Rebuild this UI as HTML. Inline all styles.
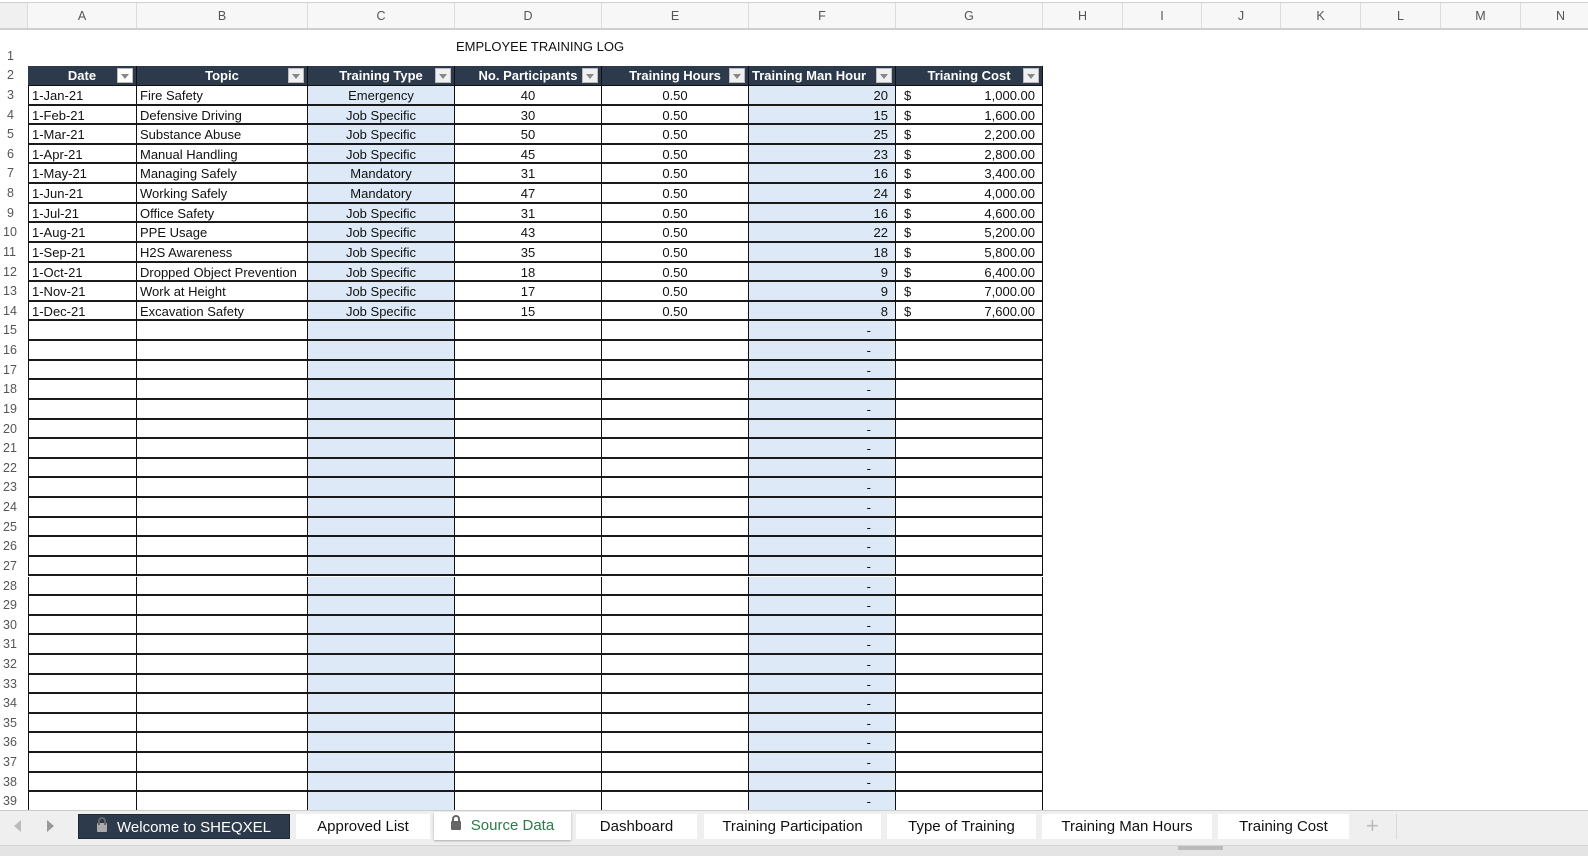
<!DOCTYPE html>
<html><head><meta charset="utf-8"><style>
*{box-sizing:border-box;margin:0;padding:0}
body{width:1588px;height:856px;overflow:hidden;background:#fff;font-family:"Liberation Sans",sans-serif;position:relative}
.ch{position:absolute;top:2px;left:0;height:28px;width:1588px;background:#f7f7f7;border-top:1px solid #d0d0d0;border-bottom:2px solid #cfcfcf;display:flex}
.ch div{height:100%;border-right:1px solid #dcdcdc;text-align:center;font-size:12.5px;color:#555;line-height:27px;flex:none}
.row{position:absolute;left:0;display:flex;height:19.62px}
.c{flex:none;height:100%;font-size:13px;line-height:19px;white-space:nowrap;overflow:hidden;padding:0 3px;color:#111}
.rn{width:28px;color:#555;font-size:12.5px;padding-left:7px;background:#fff}
.t .c:not(.rn){border-bottom:2px solid #1a1a1a;border-right:1px solid #111}
.t .a{border-left:1px solid #111}
.w1{width:109px}.w2{width:171px}.w3{width:147px}
.bl{background:#dde9f6}
.ctr{text-align:center}.r{text-align:right;padding-right:7px}
.h .c:not(.rn){background:#2d3a4b;color:#fff;font-weight:bold;font-size:13px;text-align:center;position:relative;border-right:1px solid #111;border-bottom:1px solid #111}
.fb{position:absolute;right:3px;top:2px;width:16px;height:15px;background:#eef0f2;border:1px solid #bbb}
.fb:after{content:"";position:absolute;left:3px;top:5px;border-left:4px solid transparent;border-right:4px solid transparent;border-top:5px solid #888}
.g .dol{float:left}.g{padding-left:8px}
.tabs{position:absolute;left:0;top:810px;width:1588px;height:35px;background:#efefef;border-top:1px solid #ccc}
.tab{position:absolute;top:3px;height:25px;background:#fff;font-size:15px;line-height:25px;text-align:center;color:#111}
.lock{display:inline-block;width:10px;height:9px;background:#666;border-radius:1px;position:relative;margin-right:10px;top:0}
.lock:before{content:"";position:absolute;left:1px;top:-6px;width:4px;height:6px;border:2px solid #666;border-bottom:none;border-radius:4px 4px 0 0}
.bot{position:absolute;left:0;top:845px;width:1588px;height:11px;background:#e4e4e4;border-top:1px solid #d4d4d4}
</style></head><body>
<div style="position:absolute;left:0;top:2px;width:28px;height:28px;background:#f0f0f0"><div style="position:absolute;left:6px;top:6px;border-left:18px solid transparent;border-bottom:18px solid #ddd"></div></div>
<div class="ch"><div style="width:28px;background:#f0f0f0"></div><div style="width:109px">A</div><div style="width:171px">B</div><div style="width:147px">C</div><div style="width:147px">D</div><div style="width:147px">E</div><div style="width:147px">F</div><div style="width:147px">G</div><div style="width:80px">H</div><div style="width:79px">I</div><div style="width:79px">J</div><div style="width:80px">K</div><div style="width:80px">L</div><div style="width:80px">M</div><div style="width:80px">N</div></div>
<div class="row" style="top:30px;height:36px"><div class="c rn" style="padding-top:17px">1</div><div style="position:absolute;left:456px;top:9px;font-size:13px;color:#111;white-space:nowrap">EMPLOYEE TRAINING LOG</div></div>
<div class="row h" style="top:66px;height:20px"><div class="c rn" style="background:#fff;color:#555">2</div>
<div class="c w1 a">Date<span class="fb" style="background:#fff"></span></div><div class="c w2">Topic<span class="fb"></span></div><div class="c w3">Training Type<span class="fb"></span></div><div class="c w3">No. Participants<span class="fb"></span></div><div class="c w3">Training Hours<span class="fb"></span></div><div class="c w3" style="text-align:left">Training Man Hour<span class="fb"></span></div><div class="c w3">Trianing Cost<span class="fb"></span></div></div>

<div class="row t" style="top:86px"><div class="c rn">3</div><div class="c w1 a">1-Jan-21</div><div class="c w2">Fire Safety</div><div class="c w3 bl ctr">Emergency</div><div class="c w3 ctr">40</div><div class="c w3 ctr">0.50</div><div class="c w3 bl r">20</div><div class="c w3 g r"><span class="dol">$</span>1,000.00</div></div>
<div class="row t" style="top:105.62px"><div class="c rn">4</div><div class="c w1 a">1-Feb-21</div><div class="c w2">Defensive Driving</div><div class="c w3 bl ctr">Job Specific</div><div class="c w3 ctr">30</div><div class="c w3 ctr">0.50</div><div class="c w3 bl r">15</div><div class="c w3 g r"><span class="dol">$</span>1,600.00</div></div>
<div class="row t" style="top:125.24px"><div class="c rn">5</div><div class="c w1 a">1-Mar-21</div><div class="c w2">Substance Abuse</div><div class="c w3 bl ctr">Job Specific</div><div class="c w3 ctr">50</div><div class="c w3 ctr">0.50</div><div class="c w3 bl r">25</div><div class="c w3 g r"><span class="dol">$</span>2,200.00</div></div>
<div class="row t" style="top:144.86px"><div class="c rn">6</div><div class="c w1 a">1-Apr-21</div><div class="c w2">Manual Handling</div><div class="c w3 bl ctr">Job Specific</div><div class="c w3 ctr">45</div><div class="c w3 ctr">0.50</div><div class="c w3 bl r">23</div><div class="c w3 g r"><span class="dol">$</span>2,800.00</div></div>
<div class="row t" style="top:164.48px"><div class="c rn">7</div><div class="c w1 a">1-May-21</div><div class="c w2">Managing Safely</div><div class="c w3 bl ctr">Mandatory</div><div class="c w3 ctr">31</div><div class="c w3 ctr">0.50</div><div class="c w3 bl r">16</div><div class="c w3 g r"><span class="dol">$</span>3,400.00</div></div>
<div class="row t" style="top:184.1px"><div class="c rn">8</div><div class="c w1 a">1-Jun-21</div><div class="c w2">Working Safely</div><div class="c w3 bl ctr">Mandatory</div><div class="c w3 ctr">47</div><div class="c w3 ctr">0.50</div><div class="c w3 bl r">24</div><div class="c w3 g r"><span class="dol">$</span>4,000.00</div></div>
<div class="row t" style="top:203.72px"><div class="c rn">9</div><div class="c w1 a">1-Jul-21</div><div class="c w2">Office Safety</div><div class="c w3 bl ctr">Job Specific</div><div class="c w3 ctr">31</div><div class="c w3 ctr">0.50</div><div class="c w3 bl r">16</div><div class="c w3 g r"><span class="dol">$</span>4,600.00</div></div>
<div class="row t" style="top:223.34px"><div class="c rn" style="padding-left:3px">10</div><div class="c w1 a">1-Aug-21</div><div class="c w2">PPE Usage</div><div class="c w3 bl ctr">Job Specific</div><div class="c w3 ctr">43</div><div class="c w3 ctr">0.50</div><div class="c w3 bl r">22</div><div class="c w3 g r"><span class="dol">$</span>5,200.00</div></div>
<div class="row t" style="top:242.96px"><div class="c rn" style="padding-left:3px">11</div><div class="c w1 a">1-Sep-21</div><div class="c w2">H2S Awareness</div><div class="c w3 bl ctr">Job Specific</div><div class="c w3 ctr">35</div><div class="c w3 ctr">0.50</div><div class="c w3 bl r">18</div><div class="c w3 g r"><span class="dol">$</span>5,800.00</div></div>
<div class="row t" style="top:262.58px"><div class="c rn" style="padding-left:3px">12</div><div class="c w1 a">1-Oct-21</div><div class="c w2">Dropped Object Prevention</div><div class="c w3 bl ctr">Job Specific</div><div class="c w3 ctr">18</div><div class="c w3 ctr">0.50</div><div class="c w3 bl r">9</div><div class="c w3 g r"><span class="dol">$</span>6,400.00</div></div>
<div class="row t" style="top:282.2px"><div class="c rn" style="padding-left:3px">13</div><div class="c w1 a">1-Nov-21</div><div class="c w2">Work at Height</div><div class="c w3 bl ctr">Job Specific</div><div class="c w3 ctr">17</div><div class="c w3 ctr">0.50</div><div class="c w3 bl r">9</div><div class="c w3 g r"><span class="dol">$</span>7,000.00</div></div>
<div class="row t" style="top:301.82px"><div class="c rn" style="padding-left:3px">14</div><div class="c w1 a">1-Dec-21</div><div class="c w2">Excavation Safety</div><div class="c w3 bl ctr">Job Specific</div><div class="c w3 ctr">15</div><div class="c w3 ctr">0.50</div><div class="c w3 bl r">8</div><div class="c w3 g r"><span class="dol">$</span>7,600.00</div></div>
<div class="row t" style="top:321.44px"><div class="c rn" style="padding-left:3px">15</div><div class="c w1 a"></div><div class="c w2"></div><div class="c w3 bl"></div><div class="c w3"></div><div class="c w3"></div><div class="c w3 bl r" style="padding-right:24px">-</div><div class="c w3"></div></div>
<div class="row t" style="top:341.06px"><div class="c rn" style="padding-left:3px">16</div><div class="c w1 a"></div><div class="c w2"></div><div class="c w3 bl"></div><div class="c w3"></div><div class="c w3"></div><div class="c w3 bl r" style="padding-right:24px">-</div><div class="c w3"></div></div>
<div class="row t" style="top:360.68px"><div class="c rn" style="padding-left:3px">17</div><div class="c w1 a"></div><div class="c w2"></div><div class="c w3 bl"></div><div class="c w3"></div><div class="c w3"></div><div class="c w3 bl r" style="padding-right:24px">-</div><div class="c w3"></div></div>
<div class="row t" style="top:380.3px"><div class="c rn" style="padding-left:3px">18</div><div class="c w1 a"></div><div class="c w2"></div><div class="c w3 bl"></div><div class="c w3"></div><div class="c w3"></div><div class="c w3 bl r" style="padding-right:24px">-</div><div class="c w3"></div></div>
<div class="row t" style="top:399.92px"><div class="c rn" style="padding-left:3px">19</div><div class="c w1 a"></div><div class="c w2"></div><div class="c w3 bl"></div><div class="c w3"></div><div class="c w3"></div><div class="c w3 bl r" style="padding-right:24px">-</div><div class="c w3"></div></div>
<div class="row t" style="top:419.54px"><div class="c rn" style="padding-left:3px">20</div><div class="c w1 a"></div><div class="c w2"></div><div class="c w3 bl"></div><div class="c w3"></div><div class="c w3"></div><div class="c w3 bl r" style="padding-right:24px">-</div><div class="c w3"></div></div>
<div class="row t" style="top:439.16px"><div class="c rn" style="padding-left:3px">21</div><div class="c w1 a"></div><div class="c w2"></div><div class="c w3 bl"></div><div class="c w3"></div><div class="c w3"></div><div class="c w3 bl r" style="padding-right:24px">-</div><div class="c w3"></div></div>
<div class="row t" style="top:458.78px"><div class="c rn" style="padding-left:3px">22</div><div class="c w1 a"></div><div class="c w2"></div><div class="c w3 bl"></div><div class="c w3"></div><div class="c w3"></div><div class="c w3 bl r" style="padding-right:24px">-</div><div class="c w3"></div></div>
<div class="row t" style="top:478.4px"><div class="c rn" style="padding-left:3px">23</div><div class="c w1 a"></div><div class="c w2"></div><div class="c w3 bl"></div><div class="c w3"></div><div class="c w3"></div><div class="c w3 bl r" style="padding-right:24px">-</div><div class="c w3"></div></div>
<div class="row t" style="top:498.02px"><div class="c rn" style="padding-left:3px">24</div><div class="c w1 a"></div><div class="c w2"></div><div class="c w3 bl"></div><div class="c w3"></div><div class="c w3"></div><div class="c w3 bl r" style="padding-right:24px">-</div><div class="c w3"></div></div>
<div class="row t" style="top:517.64px"><div class="c rn" style="padding-left:3px">25</div><div class="c w1 a"></div><div class="c w2"></div><div class="c w3 bl"></div><div class="c w3"></div><div class="c w3"></div><div class="c w3 bl r" style="padding-right:24px">-</div><div class="c w3"></div></div>
<div class="row t" style="top:537.26px"><div class="c rn" style="padding-left:3px">26</div><div class="c w1 a"></div><div class="c w2"></div><div class="c w3 bl"></div><div class="c w3"></div><div class="c w3"></div><div class="c w3 bl r" style="padding-right:24px">-</div><div class="c w3"></div></div>
<div class="row t" style="top:556.88px"><div class="c rn" style="padding-left:3px">27</div><div class="c w1 a"></div><div class="c w2"></div><div class="c w3 bl"></div><div class="c w3"></div><div class="c w3"></div><div class="c w3 bl r" style="padding-right:24px">-</div><div class="c w3"></div></div>
<div class="row t" style="top:576.5px"><div class="c rn" style="padding-left:3px">28</div><div class="c w1 a"></div><div class="c w2"></div><div class="c w3 bl"></div><div class="c w3"></div><div class="c w3"></div><div class="c w3 bl r" style="padding-right:24px">-</div><div class="c w3"></div></div>
<div class="row t" style="top:596.12px"><div class="c rn" style="padding-left:3px">29</div><div class="c w1 a"></div><div class="c w2"></div><div class="c w3 bl"></div><div class="c w3"></div><div class="c w3"></div><div class="c w3 bl r" style="padding-right:24px">-</div><div class="c w3"></div></div>
<div class="row t" style="top:615.74px"><div class="c rn" style="padding-left:3px">30</div><div class="c w1 a"></div><div class="c w2"></div><div class="c w3 bl"></div><div class="c w3"></div><div class="c w3"></div><div class="c w3 bl r" style="padding-right:24px">-</div><div class="c w3"></div></div>
<div class="row t" style="top:635.36px"><div class="c rn" style="padding-left:3px">31</div><div class="c w1 a"></div><div class="c w2"></div><div class="c w3 bl"></div><div class="c w3"></div><div class="c w3"></div><div class="c w3 bl r" style="padding-right:24px">-</div><div class="c w3"></div></div>
<div class="row t" style="top:654.98px"><div class="c rn" style="padding-left:3px">32</div><div class="c w1 a"></div><div class="c w2"></div><div class="c w3 bl"></div><div class="c w3"></div><div class="c w3"></div><div class="c w3 bl r" style="padding-right:24px">-</div><div class="c w3"></div></div>
<div class="row t" style="top:674.6px"><div class="c rn" style="padding-left:3px">33</div><div class="c w1 a"></div><div class="c w2"></div><div class="c w3 bl"></div><div class="c w3"></div><div class="c w3"></div><div class="c w3 bl r" style="padding-right:24px">-</div><div class="c w3"></div></div>
<div class="row t" style="top:694.22px"><div class="c rn" style="padding-left:3px">34</div><div class="c w1 a"></div><div class="c w2"></div><div class="c w3 bl"></div><div class="c w3"></div><div class="c w3"></div><div class="c w3 bl r" style="padding-right:24px">-</div><div class="c w3"></div></div>
<div class="row t" style="top:713.84px"><div class="c rn" style="padding-left:3px">35</div><div class="c w1 a"></div><div class="c w2"></div><div class="c w3 bl"></div><div class="c w3"></div><div class="c w3"></div><div class="c w3 bl r" style="padding-right:24px">-</div><div class="c w3"></div></div>
<div class="row t" style="top:733.46px"><div class="c rn" style="padding-left:3px">36</div><div class="c w1 a"></div><div class="c w2"></div><div class="c w3 bl"></div><div class="c w3"></div><div class="c w3"></div><div class="c w3 bl r" style="padding-right:24px">-</div><div class="c w3"></div></div>
<div class="row t" style="top:753.08px"><div class="c rn" style="padding-left:3px">37</div><div class="c w1 a"></div><div class="c w2"></div><div class="c w3 bl"></div><div class="c w3"></div><div class="c w3"></div><div class="c w3 bl r" style="padding-right:24px">-</div><div class="c w3"></div></div>
<div class="row t" style="top:772.7px"><div class="c rn" style="padding-left:3px">38</div><div class="c w1 a"></div><div class="c w2"></div><div class="c w3 bl"></div><div class="c w3"></div><div class="c w3"></div><div class="c w3 bl r" style="padding-right:24px">-</div><div class="c w3"></div></div>
<div class="row t" style="top:792.32px"><div class="c rn" style="padding-left:3px">39</div><div class="c w1 a"></div><div class="c w2"></div><div class="c w3 bl"></div><div class="c w3"></div><div class="c w3"></div><div class="c w3 bl r" style="padding-right:24px">-</div><div class="c w3"></div></div>

<div class="tabs">
<div style="position:absolute;left:14px;top:9px;border-right:7px solid #bbb;border-top:6px solid transparent;border-bottom:6px solid transparent"></div>
<div style="position:absolute;left:47px;top:9px;border-left:7px solid #999;border-top:6px solid transparent;border-bottom:6px solid transparent"></div>
<div class="tab" style="left:78px;width:212px;background:#2d3a4b;color:#fff;border:1px solid #1e2835"><span class="lock" style="background:#aaa"></span>Welcome to SHEQXEL</div>
<div class="tab" style="left:296px;width:134px">Approved List</div>
<div class="tab" style="left:434px;width:137px;top:1px;height:28px;line-height:28px;color:#2a7a48;box-shadow:0 1px 2px #aaa"><span class="lock"></span>Source Data</div>
<div class="tab" style="left:576px;width:121px">Dashboard</div>
<div class="tab" style="left:704px;width:177px">Training Participation</div>
<div class="tab" style="left:887px;width:149px">Type of Training</div>
<div class="tab" style="left:1042px;width:170px">Training Man Hours</div>
<div class="tab" style="left:1218px;width:131px">Training Cost</div>
<div style="position:absolute;left:1366px;top:2px;font-size:22px;color:#bbb">+</div>
<div style="position:absolute;left:1396px;top:3px;width:1px;height:25px;background:#d8d8d8"></div>
</div>
<div class="bot"><div style="position:absolute;left:1178px;top:0;width:45px;height:4px;background:#bbb"></div></div>
</body></html>
